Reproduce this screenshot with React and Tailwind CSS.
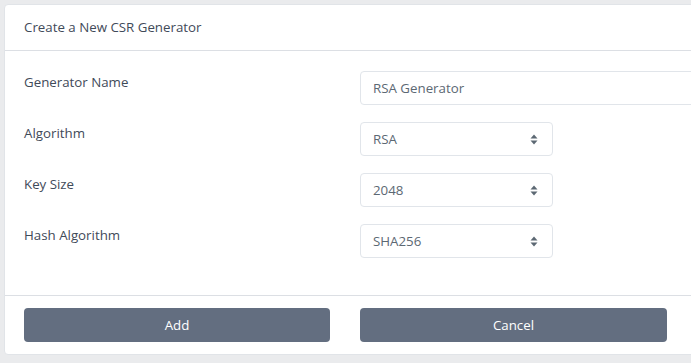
import React from "react";

function SortIcon() {
  return (
    <svg width="8" height="11" viewBox="0 0 8 11" className="shrink-0">
      <path d="M4 0.5 L7.5 4.5 L0.5 4.5 Z" fill="#5c6873" />
      <path d="M4 10.5 L7.5 6.5 L0.5 6.5 Z" fill="#5c6873" />
    </svg>
  );
}

function Select({ value }) {
  return (
    <div className="w-[193px] h-[34px] border border-[#e1e5ea] rounded-[4px] flex items-center justify-between pl-[12px] pr-[14px] pt-[1px] text-[#5c6873] bg-white">
      <span>{value}</span>
      <SortIcon />
    </div>
  );
}

const rows = [
  { label: "Algorithm", value: "RSA" },
  { label: "Key Size", value: "2048" },
  { label: "Hash Algorithm", value: "SHA256" },
];

export default function App() {
  return (
    <div
      className="w-[691px] h-[363px] bg-[#eaebed] overflow-hidden pt-[4px] pl-[4px]"
      style={{ fontFamily: '"Open Sans", "Noto Sans", sans-serif' }}
    >
      <div className="w-[760px] h-[351px] bg-white border border-[#e1e4e8] rounded-[4px] text-[13.3px] text-[#3f4a59]">
        {/* Header */}
        <div className="h-[46px] flex items-center px-[19px] border-b border-[#dcdfe4]">
          Create a New CSR Generator
        </div>

        {/* Body */}
        <div className="pt-[20px] pb-[20px] px-[19px] flex flex-col gap-[17px] h-[244px]">
          <div className="flex gap-[30px]">
            <div className="w-[306px] pt-[2px]">Generator Name</div>
            <div className="flex-1 h-[34px] border border-[#e1e5ea] rounded-[4px] flex items-center px-[12px] pt-[1px] text-[#5c6873]">
              RSA Generator
            </div>
          </div>
          {rows.map((r) => (
            <div key={r.label} className="flex gap-[30px]">
              <div className="w-[306px] pt-[2px]">{r.label}</div>
              <Select value={r.value} />
            </div>
          ))}
        </div>

        {/* Footer */}
        <div className="border-t border-[#dcdfe4] px-[19px] pt-[12px] flex gap-[30px]">
          <button className="w-[306px] h-[34px] rounded-[4px] bg-[#636e80] text-white pt-[1px]">
            Add
          </button>
          <button className="w-[307px] h-[34px] rounded-[4px] bg-[#636e80] text-white pt-[1px]">
            Cancel
          </button>
        </div>
      </div>
    </div>
  );
}
